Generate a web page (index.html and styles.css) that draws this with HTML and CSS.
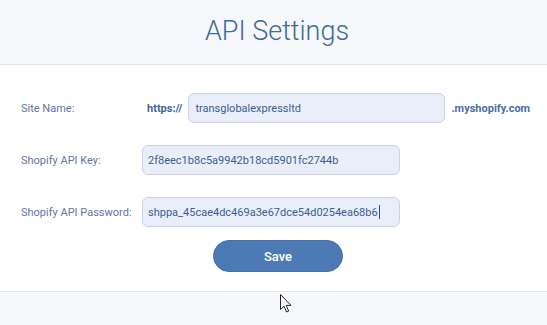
FILE: index.html
```html
<!DOCTYPE html>
<html>
<head>
<meta charset="utf-8">
<link rel="stylesheet" href="styles.css">
</head>
<body>
<div class="page">
  <header class="header">
    <h1 class="title">API Settings</h1>
  </header>
  <main class="form">
    <div class="row">
      <div class="label">Site Name:</div>
      <span class="prefix">https://</span>
      <div class="field field-site">transglobalexpressltd</div>
      <span class="suffix">.myshopify.com</span>
    </div>
    <div class="row">
      <div class="label">Shopify API Key:</div>
      <div class="field">2f8eec1b8c5a9942b18cd5901fc2744b</div>
    </div>
    <div class="row">
      <div class="label">Shopify API Password:</div>
      <div class="field">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<span class="caret"></span></div>
    </div>
    <div class="actions">
      <button class="save">Save</button>
    </div>
  </main>
  <footer class="footer"></footer>
  <svg class="pointer" width="12" height="19" viewBox="0 0 12 19">
    <path d="M0.5 0.5 L0.5 15.5 L4 12.2 L6.6 18 L8.7 17.1 L6.2 11.4 L11 11.4 Z" fill="#fff" stroke="#222" stroke-width="1" stroke-linejoin="round"/>
  </svg>
</div>
</body>
</html>
```
FILE: styles.css
```css
* { box-sizing: border-box; }
html, body { margin: 0; padding: 0; }
body {
  width: 547px;
  height: 325px;
  overflow: hidden;
  background: #ffffff;
  font-family: Roboto, "Liberation Sans", sans-serif;
}
.page {
  position: relative;
  height: 325px;
  display: flex;
  flex-direction: column;
}
.header {
  height: 65px;
  background: #f7f8fc;
  border-bottom: 1px solid #e2e5ef;
  display: flex;
  align-items: center;
  justify-content: center;
  padding-left: 7px;
}
.title {
  margin: 0;
  font-weight: 300;
  font-size: 27px;
  color: #3f6b98;
  line-height: 1;
  padding-bottom: 2px;
}
.form {
  height: 226px;
  padding: 28px 0 0 21px;
  display: flex;
  flex-direction: column;
  gap: 22px;
}
.row {
  display: flex;
  align-items: center;
  height: 30px;
}
.label {
  width: 121px;
  font-size: 11px;
  color: #6375a2;
}
.prefix {
  margin-left: 5px;
  margin-right: 6px;
  font-size: 11px;
  font-weight: 700;
  color: #3f6596;
}
.suffix {
  margin-left: 6px;
  font-size: 11px;
  font-weight: 700;
  color: #4a6fa3;
}
.field {
  width: 258px;
  height: 30px;
  background: #e9eef9;
  border: 1px solid #c9d3ea;
  border-radius: 6px;
  padding: 0 5px;
  display: flex;
  align-items: center;
  font-size: 11px;
  color: #3b5f92;
}
.field-site {
  width: 257px;
  padding-left: 6px;
}
.caret {
  display: inline-block;
  width: 1px;
  height: 14px;
  background: #2a4f86;
  margin-left: 1px;
}
.actions {
  display: flex;
  padding-left: 192px;
  margin-top: -9px;
}
.save {
  width: 130px;
  height: 32px;
  border: 1px solid #4271ad;
  border-radius: 16px;
  background: #4d7ab5;
  color: #ffffff;
  font-family: Roboto, "Liberation Sans", sans-serif;
  font-size: 13px;
  font-weight: 500;
  padding: 0;
}
.footer {
  flex: 1;
  background: #f7f8fc;
  border-top: 1px solid #e2e5ef;
}
.pointer {
  position: absolute;
  left: 280px;
  top: 294px;
}
```
